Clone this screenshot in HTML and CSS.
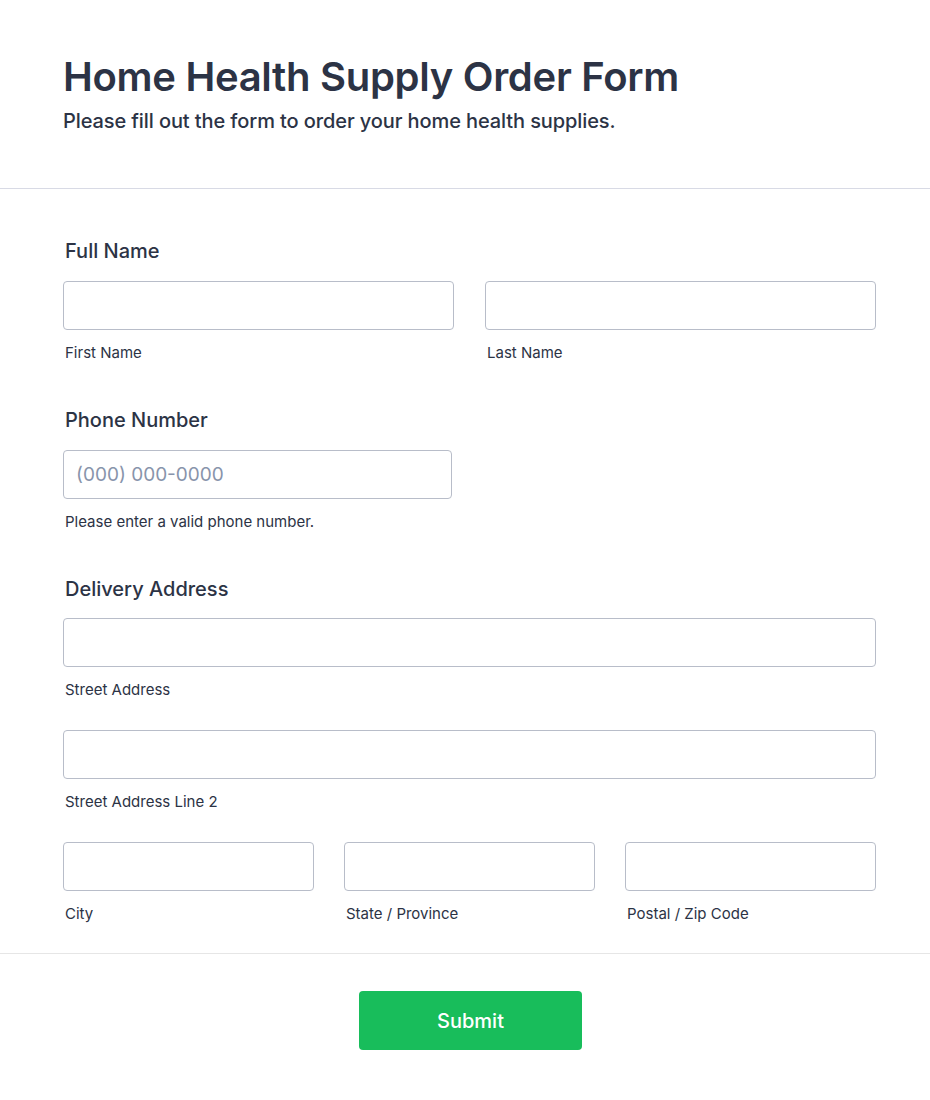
FILE: index.html
```html
<!DOCTYPE html>
<html lang="en">
<head>
    <meta charset="UTF-8">
    <meta name="viewport" content="width=device-width, initial-scale=1.0">
    <title>Home Health Supply Order Form</title>
    <link rel="stylesheet" href="styles.css">
</head>
<body>
    <form class="form">
        <div class="form-header">
            <h1 class="form-title">Home Health Supply Order Form</h1>
            <p class="form-subtitle">Please fill out the form to order your home health supplies.</p>
        </div>

        <div class="form-body">
            <div class="field">
                <label class="field-label">Full Name</label>
                <div class="row row-2">
                    <div class="sub">
                        <input class="input" type="text">
                        <span class="sub-label">First Name</span>
                    </div>
                    <div class="sub">
                        <input class="input" type="text">
                        <span class="sub-label">Last Name</span>
                    </div>
                </div>
            </div>

            <div class="field">
                <label class="field-label">Phone Number</label>
                <div class="sub phone">
                    <input class="input" type="tel" placeholder="(000) 000-0000">
                    <span class="sub-label">Please enter a valid phone number.</span>
                </div>
            </div>

            <div class="field address">
                <label class="field-label">Delivery Address</label>
                <div class="sub">
                    <input class="input" type="text">
                    <span class="sub-label">Street Address</span>
                </div>
                <div class="sub">
                    <input class="input" type="text">
                    <span class="sub-label">Street Address Line 2</span>
                </div>
                <div class="row row-3">
                    <div class="sub">
                        <input class="input" type="text">
                        <span class="sub-label">City</span>
                    </div>
                    <div class="sub">
                        <input class="input" type="text">
                        <span class="sub-label">State / Province</span>
                    </div>
                    <div class="sub">
                        <input class="input" type="text">
                        <span class="sub-label">Postal / Zip Code</span>
                    </div>
                </div>
            </div>
        </div>

        <div class="form-footer">
            <button class="btn-submit" type="button">Submit</button>
        </div>
    </form>
</body>
</html>
```

FILE: styles.css
```css
body {
    margin: 0;
    background-color: #fff;
    color: #2c3345;
    font-family: Inter, "Noto Sans", Arial, sans-serif;
}
.form-header {
    padding: 53px 54px 55px 63px;
    border-bottom: 1px solid #d8dae5;
}
.form-title {
    margin: 0;
    font-size: 40px;
    line-height: 48px;
    font-weight: 600;
    letter-spacing: -0.3px;
}
.form-subtitle {
    margin: 8px 0 0;
    font-size: 20px;
    line-height: 24px;
    font-weight: 500;
    letter-spacing: -0.1px;
}
.form-body {
    padding: 50px 54px 30px 63px;
    border-bottom: 1px solid #e6e6e6;
}
.field {
    margin-bottom: 46px;
}
.field:last-child {
    margin-bottom: 0;
}
.field-label {
    display: block;
    margin: 0 0 18px 2px;
    font-size: 20px;
    line-height: 24px;
    font-weight: 500;
}
.address .field-label {
    margin-bottom: 17px;
}
.row {
    display: grid;
    gap: 31px;
}
.row-2 {
    grid-template-columns: 1fr 1fr;
}
.row-3 {
    grid-template-columns: 1fr 1fr 1fr;
    gap: 30px;
}
.sub {
    display: flex;
    flex-direction: column;
    margin-bottom: 31px;
}
.sub:last-child,
.row .sub {
    margin-bottom: 0;
}
.phone {
    width: 389px;
}
.input {
    box-sizing: border-box;
    width: 100%;
    height: 49px;
    padding: 0 12px;
    border: 1px solid #b8bdc9;
    border-radius: 4px;
    font-family: inherit;
    font-size: 19px;
    color: #2c3345;
    background: #fff;
}
.input::placeholder {
    color: #8894ab;
}
.sub-label {
    margin: 14px 0 0 2px;
    font-size: 15px;
    line-height: 18px;
}
.form-footer {
    display: flex;
    justify-content: center;
    padding: 37px 52px 40px 63px;
}
.btn-submit {
    width: 223px;
    height: 59px;
    border: none;
    border-radius: 4px;
    background-color: #18bd5b;
    color: #fff;
    font-family: inherit;
    font-size: 20px;
    font-weight: 500;
    cursor: pointer;
}
```
